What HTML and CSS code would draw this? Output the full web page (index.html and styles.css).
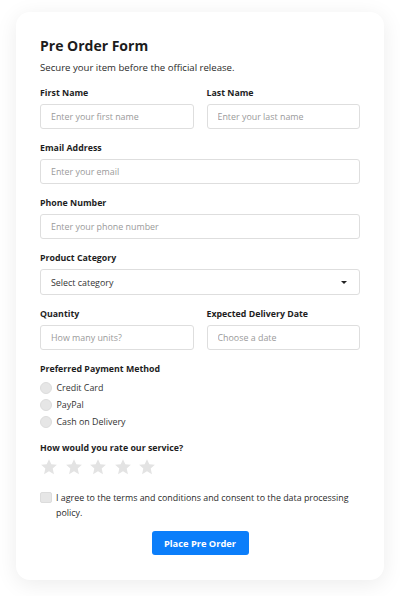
FILE: index.html
```html
<!DOCTYPE html>
<html lang="en">
<head>
<meta charset="utf-8">
<title>Pre Order Form</title>
<link rel="stylesheet" href="styles.css">
</head>
<body>
<div class="page">
  <form class="card">
    <h1 class="title">Pre Order Form</h1>
    <p class="subtitle">Secure your item before the official release.</p>

    <div class="row">
      <div class="field">
        <label class="label">First Name</label>
        <input class="input" type="text" placeholder="Enter your first name">
      </div>
      <div class="field">
        <label class="label">Last Name</label>
        <input class="input" type="text" placeholder="Enter your last name">
      </div>
    </div>

    <div class="field">
      <label class="label">Email Address</label>
      <input class="input" type="text" placeholder="Enter your email">
    </div>

    <div class="field">
      <label class="label">Phone Number</label>
      <input class="input" type="text" placeholder="Enter your phone number">
    </div>

    <div class="field">
      <label class="label">Product Category</label>
      <div class="select">
        <span class="select-text">Select category</span>
        <span class="caret"></span>
      </div>
    </div>

    <div class="row">
      <div class="field">
        <label class="label">Quantity</label>
        <input class="input" type="text" placeholder="How many units?">
      </div>
      <div class="field">
        <label class="label">Expected Delivery Date</label>
        <input class="input" type="text" placeholder="Choose a date">
      </div>
    </div>

    <div class="group">
      <div class="label">Preferred Payment Method</div>
      <div class="radios">
        <label class="radio-row"><span class="radio"></span><span>Credit Card</span></label>
        <label class="radio-row"><span class="radio"></span><span>PayPal</span></label>
        <label class="radio-row"><span class="radio"></span><span>Cash on Delivery</span></label>
      </div>
    </div>

    <div class="group group-rating">
      <div class="label">How would you rate our service?</div>
      <div class="stars">
        <svg class="star" viewBox="0 0 24 24"><path d="M12 1.5l3.1 6.9 7.4.7-5.6 5 1.7 7.4L12 17.6l-6.6 3.9 1.7-7.4-5.6-5 7.4-.7z"/></svg>
        <svg class="star" viewBox="0 0 24 24"><path d="M12 1.5l3.1 6.9 7.4.7-5.6 5 1.7 7.4L12 17.6l-6.6 3.9 1.7-7.4-5.6-5 7.4-.7z"/></svg>
        <svg class="star" viewBox="0 0 24 24"><path d="M12 1.5l3.1 6.9 7.4.7-5.6 5 1.7 7.4L12 17.6l-6.6 3.9 1.7-7.4-5.6-5 7.4-.7z"/></svg>
        <svg class="star" viewBox="0 0 24 24"><path d="M12 1.5l3.1 6.9 7.4.7-5.6 5 1.7 7.4L12 17.6l-6.6 3.9 1.7-7.4-5.6-5 7.4-.7z"/></svg>
        <svg class="star" viewBox="0 0 24 24"><path d="M12 1.5l3.1 6.9 7.4.7-5.6 5 1.7 7.4L12 17.6l-6.6 3.9 1.7-7.4-5.6-5 7.4-.7z"/></svg>
      </div>
    </div>

    <label class="agree">
      <span class="checkbox"></span>
      <span class="agree-text">I agree to the terms and conditions and consent to the data processing policy.</span>
    </label>

    <div class="actions">
      <button class="button" type="button">Place Pre Order</button>
    </div>
  </form>
</div>
</body>
</html>
```

FILE: styles.css
```css
* { box-sizing: border-box; }

html, body {
  margin: 0;
  padding: 0;
  background: #ffffff;
}

body {
  font-family: "Open Sans", "Noto Sans", "Liberation Sans", sans-serif;
  color: #222222;
}

.page {
  padding: 12px 16px 16px;
}

.card {
  display: flex;
  flex-direction: column;
  background: #ffffff;
  border-radius: 14px;
  box-shadow: 0 4px 22px rgba(0, 0, 0, 0.08);
  padding: 24px 24px 25px;
}

.title {
  margin: 0;
  font-size: 14px;
  line-height: 20px;
  font-weight: 700;
  color: #1c1c1c;
}

.subtitle {
  margin: 5px 0 12px;
  font-size: 9.6px;
  line-height: 14px;
  color: #2a2a2a;
}

.row {
  display: grid;
  grid-template-columns: 1fr 1fr;
  column-gap: 13px;
}

.field {
  display: flex;
  flex-direction: column;
  margin-bottom: 13px;
}

.label {
  display: block;
  font-size: 8.8px;
  line-height: 12px;
  font-weight: 700;
  color: #1e1e1e;
  margin-bottom: 5px;
}

.input {
  width: 100%;
  height: 25px;
  border: 1px solid #dedede;
  border-radius: 3px;
  padding: 0 10px;
  font-family: inherit;
  font-size: 8.9px;
  color: #333333;
  background: #ffffff;
  outline: none;
}

.input::placeholder {
  color: #9a9a9a;
}

.select {
  height: 26px;
  border: 1px solid #dedede;
  border-radius: 3px;
  padding: 0 12px 0 10px;
  display: flex;
  align-items: center;
  justify-content: space-between;
}

.select-text {
  font-size: 8.9px;
  color: #333333;
}

.caret {
  width: 0;
  height: 0;
  border-left: 3px solid transparent;
  border-right: 3px solid transparent;
  border-top: 3.5px solid #222222;
}

.group .label {
  margin-bottom: 4px;
}

.group-rating {
  margin-top: 12px;
}

.radios {
  display: flex;
  flex-direction: column;
}

.radio-row {
  display: flex;
  align-items: center;
  height: 17px;
  font-size: 8.9px;
  color: #333333;
}

.radio {
  width: 12px;
  height: 12px;
  border-radius: 50%;
  background: #e6e6e6;
  border: 1px solid #dcdcdc;
  margin-right: 4.5px;
  flex: none;
}

.stars {
  display: flex;
  gap: 6.5px;
  margin-top: 4px;
  margin-bottom: 14px;
}

.star {
  width: 18px;
  height: 18px;
  fill: #e3e3e3;
}

.agree {
  display: flex;
  align-items: flex-start;
  font-size: 8.9px;
  line-height: 15px;
  color: #2a2a2a;
}

.checkbox {
  width: 11.5px;
  height: 11.5px;
  border-radius: 2px;
  background: #e6e6e6;
  border: 1px solid #dcdcdc;
  margin-top: 1.5px;
  margin-right: 4.5px;
  flex: none;
}

.agree-text {
  max-width: 300px;
}

.actions {
  display: flex;
  justify-content: center;
  margin-top: 11px;
}

.button {
  width: 97px;
  height: 24px;
  border: none;
  border-radius: 3px;
  background: #0b7efa;
  color: #ffffff;
  font-family: inherit;
  font-size: 9.3px;
  font-weight: 700;
  padding: 0;
}
```
